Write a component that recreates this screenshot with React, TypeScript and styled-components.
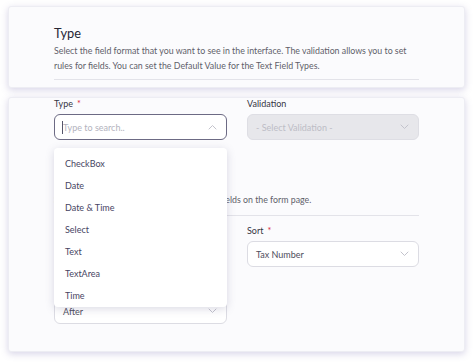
import React from "react";
import styled, { createGlobalStyle } from "styled-components";

const Global = createGlobalStyle`
  html, body {
    margin: 0;
    padding: 0;
    background: #ffffff;
    font-family: "Lato", "Noto Sans", sans-serif;
  }
`;

const Page = styled.div`
  width: 474px;
  height: 364px;
  box-sizing: border-box;
  padding: 6px 9px 0 8px;
  display: flex;
  flex-direction: column;
  gap: 9px;
  overflow: hidden;
`;

const Card = styled.section<{ $h: number }>`
  height: ${(p) => p.$h}px;
  box-sizing: border-box;
  background: #fbfbfd;
  border: 1px solid #ededf3;
  border-radius: 3px;
  box-shadow: 0 2px 7px rgba(110, 100, 170, 0.28);
  padding: 0 45px;
  position: relative;
`;

const Title = styled.h2`
  margin: 0;
  padding-top: 17px;
  font-size: 12.8px;
  font-weight: 400;
  color: #262634;
  line-height: 18px;
`;

const Desc = styled.p<{ $mt: number }>`
  margin: ${(p) => p.$mt}px 0 0;
  font-size: 8.8px;
  line-height: 15px;
  color: #5f5f6a;
`;

const Divider = styled.hr<{ $mt: number }>`
  border: 0;
  border-top: 1px solid #e3e3e9;
  margin: ${(p) => p.$mt}px 0 0;
`;

const Grid = styled.div<{ $mt: number }>`
  display: grid;
  grid-template-columns: 173px 172px;
  column-gap: 20px;
  margin-top: ${(p) => p.$mt}px;
`;

const Field = styled.div<{ $pt?: number }>`
  display: flex;
  flex-direction: column;
  position: relative;
  padding-top: ${(p) => p.$pt ?? 0}px;
`;

const Label = styled.label`
  font-size: 9px;
  color: #353543;
  line-height: 12px;
  height: 16px;
  span {
    color: #d9253a;
    margin-left: 4px;
  }
`;

const Box = styled.div<{ $state?: "focus" | "disabled" | "normal" }>`
  height: 26px;
  box-sizing: border-box;
  border-radius: 6px;
  border: 1px solid
    ${(p) =>
      p.$state === "focus" ? "#6c6a84" : p.$state === "disabled" ? "#dedee4" : "#dcdce3"};
  background: ${(p) => (p.$state === "disabled" ? "#e7e7eb" : "#ffffff")};
  display: flex;
  align-items: center;
  justify-content: space-between;
  padding: 0 9px 0 8px;
  font-size: 9px;
  color: ${(p) => (p.$state === "disabled" ? "#bdbdc6" : "#4d4d5c")};
`;

const Placeholder = styled.span`
  color: #b3b3be;
  position: relative;
  &::before {
    content: "";
    position: absolute;
    left: -1px;
    top: -1px;
    bottom: -1px;
    width: 1px;
    background: #55556a;
  }
`;

const Menu = styled.ul`
  position: absolute;
  top: 50px;
  left: 0;
  width: 173px;
  height: 159px;
  box-sizing: border-box;
  margin: 0;
  padding: 5px 0 0;
  list-style: none;
  background: #ffffff;
  border-radius: 4px;
  box-shadow: 0 2px 8px rgba(90, 85, 130, 0.22);
  z-index: 5;
`;

const Item = styled.li`
  height: 22px;
  line-height: 22px;
  padding-left: 11px;
  font-size: 9px;
  color: #474563;
`;

const Chevron = ({ up }: { up?: boolean }) => (
  <svg width="9" height="6" viewBox="0 0 9 6" fill="none">
    <path
      d={up ? "M1 5 L4.5 1.5 L8 5" : "M1 1 L4.5 4.5 L8 1"}
      stroke="#c3c3cc"
      strokeWidth="1"
      strokeLinecap="round"
      strokeLinejoin="round"
    />
  </svg>
);

const items = ["CheckBox", "Date", "Date & Time", "Select", "Text", "TextArea", "Time"];

export default function App() {
  return (
    <>
      <Global />
      <Page>
        <Card $h={82}>
          <Title>Type</Title>
          <Desc $mt={1}>
            Select the field format that you want to see in the interface. The validation allows you to set
            rules for fields. You can set the Default Value for the Text Field Types.
          </Desc>
          <Divider $mt={6} />
        </Card>
        <Card $h={255}>
          <Grid $mt={0}>
            <Field>
              <Label>
                Type<span>*</span>
              </Label>
              <Box $state="focus">
                <Placeholder>Type to search..</Placeholder>
                <Chevron up />
              </Box>
              <Menu>
                {items.map((i) => (
                  <Item key={i}>{i}</Item>
                ))}
              </Menu>
            </Field>
            <Field>
              <Label>Validation</Label>
              <Box $state="disabled">
                - Select Validation -
                <Chevron />
              </Box>
            </Field>
          </Grid>
          <Desc $mt={52}>Set the order of the new field among other fields on the form page.</Desc>
          <Divider $mt={8} />
          <Grid $mt={9}>
            <div />
            <Field>
              <Label>
                Sort<span>*</span>
              </Label>
              <Box>
                Tax Number
                <Chevron />
              </Box>
            </Field>
            <Field $pt={15}>
              <Label />
              <Box>
                After
                <Chevron />
              </Box>
            </Field>
          </Grid>
        </Card>
      </Page>
    </>
  );
}
